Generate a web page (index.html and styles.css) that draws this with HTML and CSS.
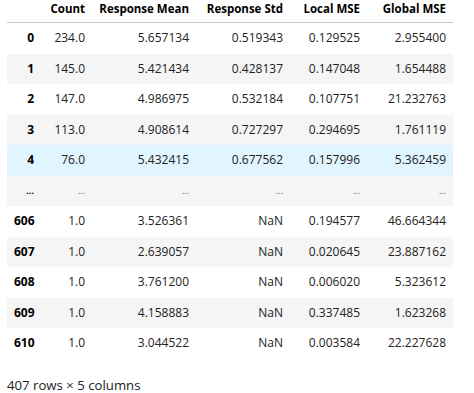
FILE: index.html
```html
<!DOCTYPE html>
<html lang="en">
<head>
  <meta charset="UTF-8">
  <title>DataFrame</title>
  <link rel="stylesheet" href="styles.css">
</head>
<body>
  <!-- Rendered DataFrame output -->
  <div class="output">
    <table class="dataframe">
      <colgroup>
        <col class="c-idx">
        <col class="c-count">
        <col class="c-mean">
        <col class="c-std">
        <col class="c-local">
        <col class="c-global">
      </colgroup>
      <thead>
        <tr>
          <th></th>
          <th>Count</th>
          <th>Response Mean</th>
          <th>Response Std</th>
          <th>Local MSE</th>
          <th>Global MSE</th>
        </tr>
      </thead>
      <tbody>
        <tr><th>0</th><td>234.0</td><td>5.657134</td><td>0.519343</td><td>0.129525</td><td>2.955400</td></tr>
        <tr><th>1</th><td>145.0</td><td>5.421434</td><td>0.428137</td><td>0.147048</td><td>1.654488</td></tr>
        <tr><th>2</th><td>147.0</td><td>4.986975</td><td>0.532184</td><td>0.107751</td><td>21.232763</td></tr>
        <tr><th>3</th><td>113.0</td><td>4.908614</td><td>0.727297</td><td>0.294695</td><td>1.761119</td></tr>
        <tr class="hover"><th>4</th><td>76.0</td><td>5.432415</td><td>0.677562</td><td>0.157996</td><td>5.362459</td></tr>
        <tr class="gap"><th>...</th><td>...</td><td>...</td><td>...</td><td>...</td><td>...</td></tr>
        <tr><th>606</th><td>1.0</td><td>3.526361</td><td>NaN</td><td>0.194577</td><td>46.664344</td></tr>
        <tr><th>607</th><td>1.0</td><td>2.639057</td><td>NaN</td><td>0.020645</td><td>23.887162</td></tr>
        <tr><th>608</th><td>1.0</td><td>3.761200</td><td>NaN</td><td>0.006020</td><td>5.323612</td></tr>
        <tr><th>609</th><td>1.0</td><td>4.158883</td><td>NaN</td><td>0.337485</td><td>1.623268</td></tr>
        <tr><th>610</th><td>1.0</td><td>3.044522</td><td>NaN</td><td>0.003584</td><td>22.227628</td></tr>
      </tbody>
    </table>
    <p class="shape">407 rows × 5 columns</p>
  </div>
</body>
</html>
```

FILE: styles.css
```css
/* Base */
* {
  margin: 0;
  padding: 0;
  box-sizing: border-box;
}
body {
  font-family: 'Open Sans', sans-serif;
  background: #fff;
  color: #222;
}

.output {
  padding: 0 7px;
}

/* DataFrame table */
.dataframe {
  border-collapse: collapse;
  table-layout: fixed;
  width: 446px;
  font-size: 12px;
  line-height: 16px;
}
.c-idx { width: 34px; }
.c-count { width: 51px; }
.c-mean { width: 104px; }
.c-std { width: 94px; }
.c-local { width: 77px; }
.c-global { width: 86px; }

.dataframe th,
.dataframe td {
  text-align: right;
  white-space: nowrap;
  padding: 7px 7px 7.5px;
}
.dataframe thead th {
  padding: 1px 7px 5px;
  font-size: 11.5px;
  font-weight: 700;
  color: #000;
  border-bottom: 1px solid #c8c8c8;
}
.dataframe tbody th {
  font-weight: 700;
  color: #000;
}
.dataframe tbody tr:nth-child(even) {
  background: #f5f5f5;
}
.dataframe tbody tr.hover {
  background: #e1f5fe;
}
.dataframe tr.gap th,
.dataframe tr.gap td {
  font-size: 9px;
  color: #666;
}
.dataframe tr.gap th {
  color: #000;
}

/* Shape caption */
.shape {
  margin-top: 17px;
  font-size: 13.2px;
  color: #222;
}
```
